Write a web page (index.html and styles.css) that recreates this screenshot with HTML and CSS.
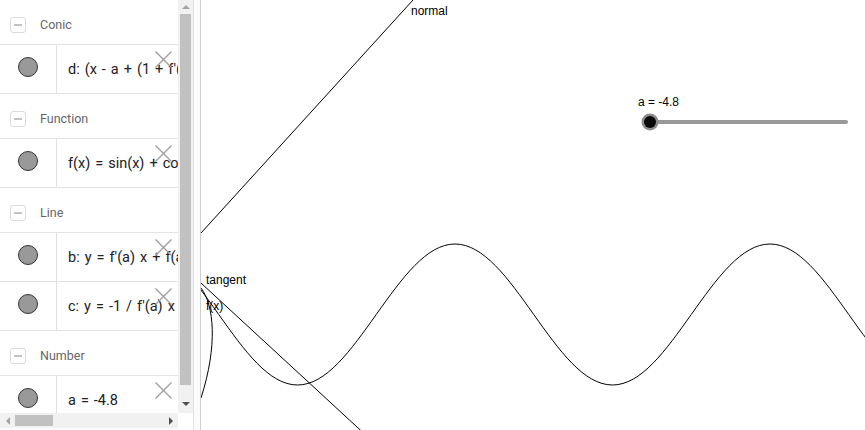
FILE: index.html
```html
<!DOCTYPE html>
<html>
<head>
<meta charset="utf-8">
<link rel="stylesheet" href="styles.css">
</head>
<body>
<div class="app">
  <div class="algebra">
    <div class="av-main">
      <div class="av-list">
        <div class="group-header"><span class="toggle"><span class="minus"></span></span><span class="group-label">Conic</span></div>
        <div class="item">
          <div class="marble-cell"><span class="marble"></span></div>
          <div class="formula">d: (x - a + (1 + f'(a)²) / f''(a))²</div>
          <span class="delete"><svg viewBox="0 0 17 17" width="17" height="17"><path d="M0.5 0.5 L16.5 16.5 M16.5 0.5 L0.5 16.5"/></svg></span>
        </div>
        <div class="group-header"><span class="toggle"><span class="minus"></span></span><span class="group-label">Function</span></div>
        <div class="item">
          <div class="marble-cell"><span class="marble"></span></div>
          <div class="formula">f(x) = sin(x) + cos(x)</div>
          <span class="delete"><svg viewBox="0 0 17 17" width="17" height="17"><path d="M0.5 0.5 L16.5 16.5 M16.5 0.5 L0.5 16.5"/></svg></span>
        </div>
        <div class="group-header"><span class="toggle"><span class="minus"></span></span><span class="group-label">Line</span></div>
        <div class="item">
          <div class="marble-cell"><span class="marble"></span></div>
          <div class="formula">b: y = f'(a) x + f(a) - a f'(a)</div>
          <span class="delete"><svg viewBox="0 0 17 17" width="17" height="17"><path d="M0.5 0.5 L16.5 16.5 M16.5 0.5 L0.5 16.5"/></svg></span>
        </div>
        <div class="item">
          <div class="marble-cell"><span class="marble"></span></div>
          <div class="formula">c: y = -1 / f'(a) x + f(a)</div>
          <span class="delete"><svg viewBox="0 0 17 17" width="17" height="17"><path d="M0.5 0.5 L16.5 16.5 M16.5 0.5 L0.5 16.5"/></svg></span>
        </div>
        <div class="group-header"><span class="toggle"><span class="minus"></span></span><span class="group-label">Number</span></div>
        <div class="item">
          <div class="marble-cell"><span class="marble"></span></div>
          <div class="formula">a = -4.8</div>
          <span class="delete"><svg viewBox="0 0 17 17" width="17" height="17"><path d="M0.5 0.5 L16.5 16.5 M16.5 0.5 L0.5 16.5"/></svg></span>
        </div>
      </div>
      <div class="vscroll">
        <div class="sbtn"><span class="arr-up"></span></div>
        <div class="vthumb"></div>
        <div class="vspace"></div>
        <div class="sbtn sbtn-end"><span class="arr-down"></span></div>
      </div>
    </div>
    <div class="hrow">
      <div class="hscroll">
        <div class="hbtn"><span class="arr-left"></span></div>
        <div class="hthumb"></div>
        <div class="hspace"></div>
        <div class="hbtn"><span class="arr-right"></span></div>
      </div>
      <div class="corner"></div>
    </div>
  </div>
  <div class="divider"></div>
  <div class="graphics">
    <svg class="plot" viewBox="201 0 664 430" width="664" height="430">
      <path class="curve" d="M 140 244 C 168.5 244, 193.07 278.38, 218.75 314.5 C 244.43 350.62, 269 385, 297.5 385 C 326 385, 350.57 350.62, 376.25 314.5 C 401.93 278.38, 426.5 244, 455 244 C 483.5 244, 508.07 278.38, 533.75 314.5 C 559.43 350.62, 584 385, 612.5 385 C 641 385, 665.57 350.62, 691.25 314.5 C 716.93 278.38, 741.5 244, 770 244 C 798.5 244, 823.07 278.38, 848.75 314.5 C 874.43 350.62, 899 385, 927.5 385"/>
      <path class="curve" d="M 201 288 C 214 305, 218 345, 201 398"/>
      <line class="curve" x1="195" y1="277.5" x2="363" y2="432.5"/>
      <line class="curve" x1="196" y1="238.5" x2="416" y2="-3.3"/>
      <text class="lbl" x="411" y="15">normal</text>
      <text class="lbl" x="206" y="284">tangent</text>
      <text class="lbl" x="206" y="310">f(x)</text>
      <text class="lbl" x="638" y="106">a = -4.8</text>
      <line class="track" x1="650" y1="122" x2="846" y2="122"/>
      <circle class="knob-halo" cx="650" cy="122" r="8.5"/>
      <circle class="knob" cx="650" cy="122" r="6"/>
    </svg>
  </div>
</div>
</body>
</html>
```
FILE: styles.css
```css
html, body {
  margin: 0;
  padding: 0;
  background: #fff;
  overflow: hidden;
}
.app {
  display: flex;
  width: 865px;
  height: 430px;
}
.algebra {
  width: 193px;
  display: flex;
  flex-direction: column;
  background: #fff;
}
.av-main {
  display: flex;
  height: 413px;
}
.av-list {
  width: 178px;
  overflow: hidden;
}
.group-header {
  height: 39px;
  padding-top: 5px;
  border-bottom: 1px solid #e3e3e3;
  display: flex;
  align-items: center;
}
.toggle {
  margin-left: 10px;
  width: 14px;
  height: 14px;
  border: 1px solid #dcdcdc;
  border-radius: 3px;
  display: flex;
  align-items: center;
  justify-content: center;
  flex: none;
  margin-top: 1px;
}
.minus {
  width: 8px;
  height: 1.5px;
  background: #c4c4c4;
}
.group-label {
  margin-left: 14px;
  font-family: Roboto, "Liberation Sans", sans-serif;
  font-size: 12.5px;
  color: #666;
}
.item {
  position: relative;
  height: 48px;
  border-bottom: 1px solid #e3e3e3;
  display: flex;
}
.marble-cell {
  width: 56px;
  flex: none;
  border-right: 1px solid #e0e0e0;
}
.marble {
  display: block;
  width: 18px;
  height: 18px;
  margin: 12px 0 0 18px;
  border-radius: 50%;
  background: #999;
  border: 1px solid #333;
}
.formula {
  padding-left: 11px;
  display: flex;
  align-items: center;
  white-space: nowrap;
  font-family: Roboto, "Liberation Sans", sans-serif;
  font-size: 14.5px;
  color: #222;
  word-spacing: 1.4px;
}
.delete {
  position: absolute;
  left: 155px;
  top: 6px;
  width: 17px;
  height: 17px;
}
.delete svg {
  display: block;
}
.delete path {
  stroke: #a0a0a0;
  stroke-width: 1.4;
  fill: none;
}
.vscroll {
  width: 15px;
  background: #f1f1f1;
  display: flex;
  flex-direction: column;
}
.sbtn {
  height: 14px;
  display: flex;
  align-items: center;
  justify-content: center;
  flex: none;
}
.sbtn-end {
  height: 17px;
  padding-bottom: 1px;
}
.vthumb {
  height: 371px;
  margin: 0 2px;
  background: #c1c1c1;
  flex: none;
}
.vspace {
  flex: 1;
}
.arr-up {
  width: 0;
  height: 0;
  border-left: 4px solid transparent;
  border-right: 4px solid transparent;
  border-bottom: 4px solid #a3a3a3;
}
.arr-down {
  width: 0;
  height: 0;
  border-left: 4px solid transparent;
  border-right: 4px solid transparent;
  border-top: 4px solid #505050;
}
.hrow {
  display: flex;
  height: 15px;
}
.hscroll {
  width: 178px;
  background: #f1f1f1;
  display: flex;
}
.hbtn {
  width: 15px;
  display: flex;
  align-items: center;
  justify-content: center;
  flex: none;
}
.hthumb {
  width: 38px;
  margin: 2px 0;
  background: #c1c1c1;
}
.hspace {
  flex: 1;
}
.arr-left {
  width: 0;
  height: 0;
  border-top: 4px solid transparent;
  border-bottom: 4px solid transparent;
  border-right: 4px solid #a3a3a3;
}
.arr-right {
  width: 0;
  height: 0;
  border-top: 4px solid transparent;
  border-bottom: 4px solid transparent;
  border-left: 4px solid #505050;
}
.corner {
  width: 15px;
  background: #fff;
}
.divider {
  width: 6px;
  background: #fbfbfb;
  border-left: 1px solid #e2e2e2;
  border-right: 1px solid #cfcfcf;
}
.graphics {
  width: 664px;
  height: 430px;
  background: #fff;
  overflow: hidden;
}
.plot {
  display: block;
}
.curve {
  fill: none;
  stroke: #000;
  stroke-width: 1;
}
.lbl {
  font-family: "Liberation Sans", Arial, sans-serif;
  font-size: 12px;
  fill: #000;
}
.track {
  stroke: #999;
  stroke-width: 4;
  stroke-linecap: round;
}
.knob-halo {
  fill: #8c8c8c;
}
.knob {
  fill: #0a0a0a;
}
```
